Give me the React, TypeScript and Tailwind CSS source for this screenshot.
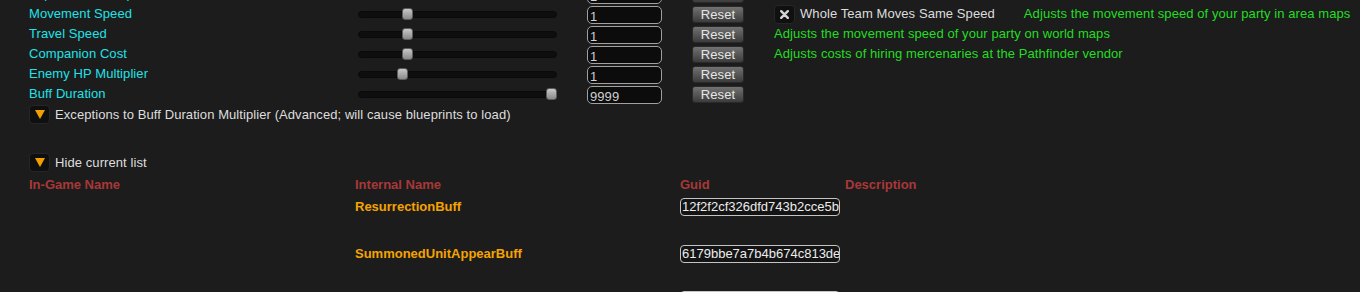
import React from "react";

const font = { fontFamily: '"Liberation Sans", Arial, sans-serif' };

type Row = { label: string; value: string; pos: number; desc?: React.ReactNode };

function Slider({ pos }: { pos: number }) {
  return (
    <div className="relative w-[199px] h-[12px] flex items-center">
      <div className="w-full h-[7px] rounded-full bg-[#0e0e0e] border border-[#0a0a0a]" />
      <div
        className="absolute top-0 w-[11px] h-[12px] rounded-[3px] border border-[#5c5c5c] bg-gradient-to-b from-[#c8c8c8] to-[#8a8a8a]"
        style={{ left: pos }}
      />
    </div>
  );
}

function Field({ value }: { value: string }) {
  return (
    <div className="w-[75px] h-[18px] rounded-[5px] border border-[#a0a0a0] bg-[#0c0c0c] pl-[2px] pt-[2px] text-[13px] leading-[16px] text-[#cfcfcf] overflow-hidden whitespace-nowrap">
      {value}
    </div>
  );
}

function ResetBtn() {
  return (
    <div className="w-[52px] h-[17px] rounded-[3px] border border-[#2a2a2a] bg-gradient-to-b from-[#727272] to-[#3c3c3c] flex items-center justify-center text-[13px] leading-[15px] text-[#e6e6e6]">
      Reset
    </div>
  );
}

function Toggle() {
  return (
    <div className="w-[21px] h-[19px] rounded-[4px] bg-[#0f0f0f] border border-[#262626] flex items-center justify-center">
      <svg width="10" height="9" viewBox="0 0 10 9">
        <polygon points="0,0 10,0 5,9" fill="#f2a000" />
      </svg>
    </div>
  );
}

function Check() {
  return (
    <div className="w-[21px] h-[19px] rounded-[4px] bg-[#101010] border border-[#262626] flex items-center justify-center">
      <svg width="9" height="9" viewBox="0 0 9 9">
        <path d="M1.2 1.2 L7.8 7.8 M7.8 1.2 L1.2 7.8" stroke="#d4d4d4" strokeWidth="2.4" strokeLinecap="round" />
      </svg>
    </div>
  );
}

const green = "text-[#22de22]";

export default function App() {
  const rows: Row[] = [
    { label: "Experience Multiplier", value: "1", pos: 44 },
    {
      label: "Movement Speed",
      value: "1",
      pos: 44,
      desc: (
        <div className="flex items-center">
          <Check />
          <span className="ml-[5px] text-[#dcdcdc]">Whole Team Moves Same Speed</span>
          <span className={`ml-[29px] ${green}`}>Adjusts the movement speed of your party in area maps</span>
        </div>
      ),
    },
    {
      label: "Travel Speed",
      value: "1",
      pos: 44,
      desc: <span className={green}>Adjusts the movement speed of your party on world maps</span>,
    },
    {
      label: "Companion Cost",
      value: "1",
      pos: 44,
      desc: <span className={green}>Adjusts costs of hiring mercenaries at the Pathfinder vendor</span>,
    },
    { label: "Enemy HP Multiplier", value: "1", pos: 39 },
    { label: "Buff Duration", value: "9999", pos: 188 },
  ];

  const buffs = [
    { name: "ResurrectionBuff", guid: "12f2f2cf326dfd743b2cce5b", h: "h-[47px]" },
    { name: "SummonedUnitAppearBuff", guid: "6179bbe7a7b4b674c813de", h: "h-[46px]" },
    { name: "", guid: "", h: "h-[47px]" },
  ];

  return (
    <div className="w-[1360px] h-[292px] overflow-hidden bg-[#1c1c1c] text-[13px] tracking-[0.08px]" style={font}>
      <div className="mt-[-16px] pl-[29px] flex flex-col">
        {rows.map((r, i) => (
          <div key={i} className="h-[20px] flex items-center">
            <div className="w-[329px] text-[#20e2e8] leading-[16px]">{r.label}</div>
            <Slider pos={r.pos} />
            <div className="ml-[30px] pt-[2px]">
              <Field value={r.value} />
            </div>
            <div className="ml-[30px]">
              <ResetBtn />
            </div>
            <div className="ml-[30px] leading-[16px]">{r.desc}</div>
          </div>
        ))}

        <div className="mt-[1px] h-[19px] flex items-center">
          <Toggle />
          <span className="ml-[5px] text-[#dedede] pt-[1px]">
            Exceptions to Buff Duration Multiplier (Advanced; will cause blueprints to load)
          </span>
        </div>

        <div className="mt-[29px] h-[19px] flex items-center">
          <Toggle />
          <span className="ml-[5px] text-[#dedede]">Hide current list</span>
        </div>

        <div className="mt-[5px] h-[16px] flex items-center font-bold text-[#a83838] leading-[16px] tracking-normal">
          <div className="w-[326px]">In-Game Name</div>
          <div className="w-[325px]">Internal Name</div>
          <div className="w-[165px]">Guid</div>
          <div>Description</div>
        </div>

        <div className="mt-[5px] flex flex-col">
          {buffs.map((b, i) => (
            <div key={i} className={`${b.h} flex items-start`}>
              <div className="w-[326px]" />
              <div className="w-[325px] h-[18px] flex items-center font-bold text-[#f5a300] tracking-normal">{b.name}</div>
              <div className="w-[160px] h-[18px] rounded-[4px] border border-[#c4c4c4] bg-[#141414] pl-[1px] text-[13px] leading-[16px] text-[#ececec] overflow-hidden whitespace-nowrap tracking-normal">
                {b.guid}
              </div>
            </div>
          ))}
        </div>
      </div>
    </div>
  );
}
